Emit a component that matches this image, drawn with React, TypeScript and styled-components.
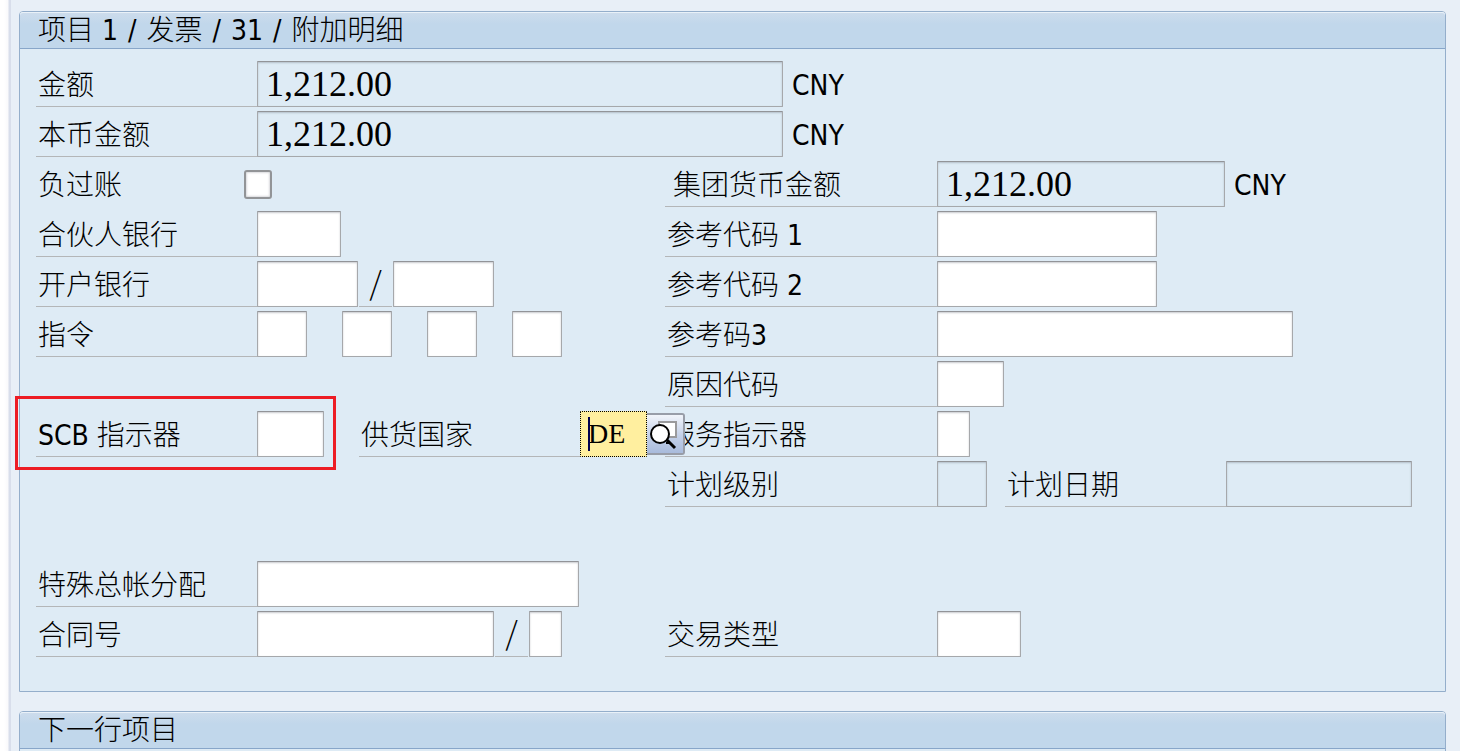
import React, { useId } from "react";
import styled, { createGlobalStyle } from "styled-components";

const GlobalStyle = createGlobalStyle`
  *, *::before, *::after { box-sizing: border-box; }
  body {
    margin: 0;
    background: #e8eff7;
    color: #000;
    font: 300 28px/36px "DejaVu Sans Condensed", "Noto Sans CJK SC", sans-serif;
  }
`;

const Page = styled.main`
  display: flex;
  flex-direction: column;
  gap: 19px;
  height: 100vh;
  overflow: hidden;
  padding: 11px 14px 0 8px;
  border-left: 11px solid #fbfcfd;
  border-image: linear-gradient(to right, #fff 0 4px, #f9f9fb 8px, #d8deeb 9px 11px) 0 0 0 11 / 0 0 0 11px;
`;

const Panel = styled.section`
  flex: none;
  border: 1px solid #94aecb;
  border-radius: 4px 4px 0 0;
  background: #deebf5;
`;

const PanelTitle = styled.h2`
  margin: 0;
  height: 37px;
  padding: 1px 18px 0;
  border-bottom: 1px solid #88a6c9;
  border-radius: 3px 3px 0 0;
  background: linear-gradient(#cddcec, #c1d7eb 12px);
  box-shadow: inset 0 1px #e9f1f8;
  font: inherit;
`;

const TitleDivider = styled.span`
  margin: 0 2px;
`;

const PanelBody = styled.form`
  display: flex;
  flex-direction: column;
  gap: 4px;
  padding: 12px 16px 34px;
`;

const Row = styled.div`
  display: grid;
  grid-template-columns: minmax(0, 629fr) minmax(0, 764fr);
  height: 46px;
`;

const Cell = styled.div<{ $gap?: number }>`
  display: flex;
  gap: ${(p) => p.$gap ?? 0}px;
`;

const Group = styled.div`
  position: relative;
  display: flex;
`;

const Label = styled.label<{ $width: number; $indent?: number; $plain?: boolean }>`
  flex: none;
  width: ${(p) => p.$width}px;
  padding: 7px 0 0 ${(p) => p.$indent ?? 2}px;
  border-bottom: 1px solid ${(p) => (p.$plain ? "transparent" : "#b4b6b8")};
  white-space: nowrap;
`;

const Input = styled.input<{ $width: number }>`
  flex: none;
  width: ${(p) => p.$width}px;
  height: 46px;
  padding: 0 8px;
  border: 1px solid #a6a8ab;
  border-top-color: #929498;
  border-radius: 1px;
  outline: none;
  background: #fff;
  box-shadow: inset 0 1px 2px #c8cacf;
  color: #000;
  font: 36px/40px "Liberation Serif", serif;

  &:read-only {
    background: #deebf5;
    box-shadow: inset 0 1px 2px #b3bec8;
  }
`;

const ActiveInput = styled(Input)`
  padding: 0 7px;
  border: 1px dotted #000;
  background: #ffef9f;
  box-shadow: none;
  font-size: 28px;
`;

const Caret = styled.span`
  position: absolute;
  left: 8px;
  top: 6px;
  width: 2px;
  height: 34px;
  background: #000050;
`;

const SearchHelp = styled.button`
  position: absolute;
  left: 100%;
  top: 2px;
  z-index: 1;
  width: 38px;
  height: 42px;
  padding: 0;
  border: 2px solid #989da8;
  border-left: 0;
  border-radius: 0 3px 3px 0;
  background: linear-gradient(#f1f4fa, #c3d0e8 55%, #a9bbdc);
  line-height: 0;
`;

const Check = styled.input`
  appearance: none;
  width: 28px;
  height: 29px;
  margin: 9px 0 0;
  border: 2px solid #929497;
  border-radius: 3px;
  background: #fff;
  box-shadow: inset 0 0 2px 1px #d9dadd;
`;

const Unit = styled.span`
  padding: 7px 0 0 9px;
`;

const Separator = styled.span`
  width: 33px;
  margin: 0 1px;
  border-bottom: 1px solid #b4b6b8;
  font: 300 32px/40px "Noto Sans CJK SC", sans-serif;
  text-align: center;
`;

const Highlight = styled.div`
  position: absolute;
  inset: -15px -12px -13px -21px;
  border: 3px solid #ed1c24;
  pointer-events: none;
`;

type FieldProps = {
  label: string;
  width: number;
  labelWidth?: number;
  indent?: number;
  value?: string;
  readOnly?: boolean;
  unit?: string;
};

function Field({ label, width, labelWidth = 221, indent, value, readOnly, unit }: FieldProps) {
  const id = useId();
  return (
    <>
      <Label htmlFor={id} $width={labelWidth} $indent={indent}>{label}</Label>
      <Input id={id} $width={width} defaultValue={value} readOnly={readOnly} />
      {unit && <Unit>{unit}</Unit>}
    </>
  );
}

const RightField = (props: FieldProps) => (
  <Field labelWidth={272} {...props} />
);

function MagnifierIcon() {
  return (
    <svg width="36" height="38" viewBox="0 0 36 38" fill="none" aria-hidden="true">
      <path d="M12 7h17v15H12z" fill="#fff" stroke="#9a9a9c" strokeWidth="2" />
      <path d="M20 25l8 8" stroke="#000" strokeWidth="3" />
      <path d="M19 28h4" stroke="#000" strokeWidth="2" />
      <circle cx="13" cy="19" r="9" fill="#fff" stroke="#000" strokeWidth="2" />
    </svg>
  );
}

export default function App() {
  return (
    <>
      <GlobalStyle />
      <Page>
        <Panel>
          <PanelTitle>
            项目 1 <TitleDivider>/</TitleDivider> 发票 <TitleDivider>/</TitleDivider> 31 <TitleDivider>/</TitleDivider> 附加明细
          </PanelTitle>
          <PanelBody>
            <Row>
              <Cell><Field label="金额" width={526} value="1,212.00" readOnly unit="CNY" /></Cell>
            </Row>
            <Row>
              <Cell><Field label="本币金额" width={526} value="1,212.00" readOnly unit="CNY" /></Cell>
            </Row>
            <Row>
              <Cell>
                <Label htmlFor="negative" $width={208} $plain>负过账</Label>
                <Check id="negative" type="checkbox" />
              </Cell>
              <Cell><RightField label="集团货币金额" indent={8} width={288} value="1,212.00" readOnly unit="CNY" /></Cell>
            </Row>
            <Row>
              <Cell><Field label="合伙人银行" width={84} /></Cell>
              <Cell><RightField label="参考代码 1" width={220} /></Cell>
            </Row>
            <Row>
              <Cell>
                <Field label="开户银行" width={101} />
                <Separator>/</Separator>
                <Input $width={101} aria-label="开户银行账户" />
              </Cell>
              <Cell><RightField label="参考代码 2" width={220} /></Cell>
            </Row>
            <Row>
              <Cell $gap={35}>
                <Group><Field label="指令" width={50} /></Group>
                <Input $width={50} aria-label="指令 2" />
                <Input $width={50} aria-label="指令 3" />
                <Input $width={50} aria-label="指令 4" />
              </Cell>
              <Cell><RightField label="参考码3" width={356} /></Cell>
            </Row>
            <Row>
              <Cell />
              <Cell><RightField label="原因代码" width={67} /></Cell>
            </Row>
            <Row>
              <Cell $gap={35}>
                <Group>
                  <Field label="SCB 指示器" width={67} />
                  <Highlight />
                </Group>
                <Group>
                  <Label htmlFor="country" $width={221}>供货国家</Label>
                  <Group>
                    <ActiveInput id="country" $width={67} defaultValue="DE" />
                    <Caret />
                    <SearchHelp type="button" aria-label="搜索帮助"><MagnifierIcon /></SearchHelp>
                  </Group>
                </Group>
              </Cell>
              <Cell><RightField label="服务指示器" width={33} /></Cell>
            </Row>
            <Row>
              <Cell />
              <Cell $gap={18}>
                <Group><RightField label="计划级别" width={50} readOnly /></Group>
                <Group><Field label="计划日期" width={186} readOnly /></Group>
              </Cell>
            </Row>
            <Row />
            <Row>
              <Cell><Field label="特殊总帐分配" width={322} /></Cell>
            </Row>
            <Row>
              <Cell>
                <Field label="合同号" width={237} />
                <Separator>/</Separator>
                <Input $width={33} aria-label="合同类型" />
              </Cell>
              <Cell><RightField label="交易类型" width={84} /></Cell>
            </Row>
          </PanelBody>
        </Panel>
        <Panel>
          <PanelTitle>下一行项目</PanelTitle>
          <PanelBody />
        </Panel>
      </Page>
    </>
  );
}
